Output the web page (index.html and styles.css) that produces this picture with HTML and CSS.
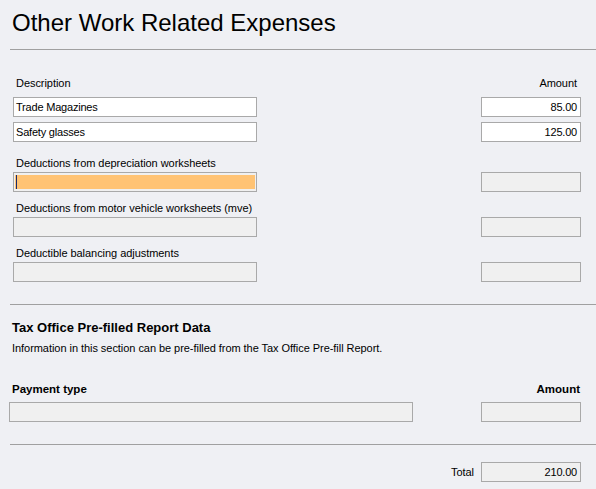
FILE: index.html
```html
<!DOCTYPE html>
<html lang="en">
<head>
<meta charset="utf-8">
<title>Other Work Related Expenses</title>
<link rel="stylesheet" href="styles.css">
</head>
<body>
<h1 class="title">Other Work Related Expenses</h1>
<div class="rule"></div>

<section class="form">
  <div class="lbl-row first">
    <span class="lbl">Description</span>
    <span class="lbl amt-lbl">Amount</span>
  </div>
  <div class="row">
    <div class="field desc">Trade Magazines</div>
    <div class="field amt">85.00</div>
  </div>
  <div class="row next">
    <div class="field desc">Safety glasses</div>
    <div class="field amt">125.00</div>
  </div>

  <div class="lbl-row sub top">
    <span class="lbl">Deductions from depreciation worksheets</span>
  </div>
  <div class="row">
    <div class="field desc disabled focus"><span class="hl"><span class="caret"></span></span></div>
    <div class="field amt disabled"></div>
  </div>

  <div class="lbl-row sub">
    <span class="lbl">Deductions from motor vehicle worksheets (mve)</span>
  </div>
  <div class="row">
    <div class="field desc disabled"></div>
    <div class="field amt disabled"></div>
  </div>

  <div class="lbl-row sub">
    <span class="lbl">Deductible balancing adjustments</span>
  </div>
  <div class="row">
    <div class="field desc disabled"></div>
    <div class="field amt disabled"></div>
  </div>
</section>

<div class="rule r2"></div>

<section class="prefill">
  <h2 class="sec-title">Tax Office Pre-filled Report Data</h2>
  <p class="info">Information in this section can be pre-filled from the Tax Office Pre-fill Report.</p>
  <div class="bold-row">
    <span class="blbl">Payment type</span>
    <span class="blbl">Amount</span>
  </div>
  <div class="row">
    <div class="field ptype disabled"></div>
    <div class="field amt disabled"></div>
  </div>
</section>

<div class="rule r3"></div>

<div class="total-row">
  <span class="lbl">Total</span>
  <div class="field amt disabled">210.00</div>
</div>
</body>
</html>
```

FILE: styles.css
```css
html, body {
  margin: 0;
  padding: 0;
}
body {
  width: 596px;
  height: 489px;
  overflow: hidden;
  background: #eff0f4;
  color: #000;
  font-family: "Liberation Sans", Arial, sans-serif;
  font-size: 11px;
}
.title {
  margin: 0;
  padding: 9px 12px 12px;
  font-size: 24px;
  font-weight: normal;
  line-height: 28px;
  color: #000;
}
.rule {
  height: 1px;
  margin-left: 10px;
  background: #a0a0a0;
}
.form {
  padding: 0 15px 0 13px;
}
.lbl-row {
  display: flex;
  justify-content: space-between;
  line-height: 14px;
  padding: 0 4px 0 3px;
}
.lbl-row.first {
  margin-top: 26px;
  margin-bottom: 7px;
}
.lbl-row.sub {
  margin-top: 9px;
  margin-bottom: 2px;
}
.lbl-row.sub.top {
  margin-top: 14px;
}
.lbl {
  font-size: 11px;
  letter-spacing: -0.05px;
  line-height: 14px;
}
.row {
  display: flex;
  justify-content: space-between;
  height: 20px;
}
.row.next {
  margin-top: 5px;
}
.field {
  box-sizing: border-box;
  height: 20px;
  border: 1px solid #a9a9a9;
  background: #fff;
  font-size: 11px;
  letter-spacing: -0.2px;
  line-height: 18px;
  padding: 0 2px;
  white-space: nowrap;
  overflow: hidden;
}
.field.desc {
  width: 244px;
}
.field.amt {
  width: 100px;
  text-align: right;
  padding-right: 3px;
}
.field.ptype {
  width: 404px;
}
.field.disabled {
  background: #f0f0f0;
}
.field.focus {
  padding: 2px 1px 2px 1px;
}
.hl {
  display: block;
  height: 14px;
  background: #ffc374;
  position: relative;
}
.caret {
  position: absolute;
  left: 1px;
  top: 0;
  width: 1px;
  height: 14px;
  background: #1b2a6b;
}
.rule.r2 {
  margin-top: 22px;
}
.prefill {
  padding: 0 15px 0 9px;
}
.sec-title {
  margin: 15px 0 0;
  padding-left: 3px;
  font-size: 13px;
  font-weight: bold;
  line-height: 16px;
}
.info {
  margin: 5px 0 0;
  padding-left: 3px;
  font-size: 11px;
  letter-spacing: -0.05px;
  line-height: 14px;
}
.bold-row {
  display: flex;
  justify-content: space-between;
  margin: 27px 0 6px;
  padding: 0 1px 0 3px;
  line-height: 14px;
}
.blbl {
  font-size: 11.5px;
  font-weight: bold;
}
.rule.r3 {
  margin-top: 22px;
}
.total-row {
  display: flex;
  justify-content: flex-end;
  align-items: center;
  gap: 7px;
  margin-top: 17px;
  padding-right: 15px;
}
```
